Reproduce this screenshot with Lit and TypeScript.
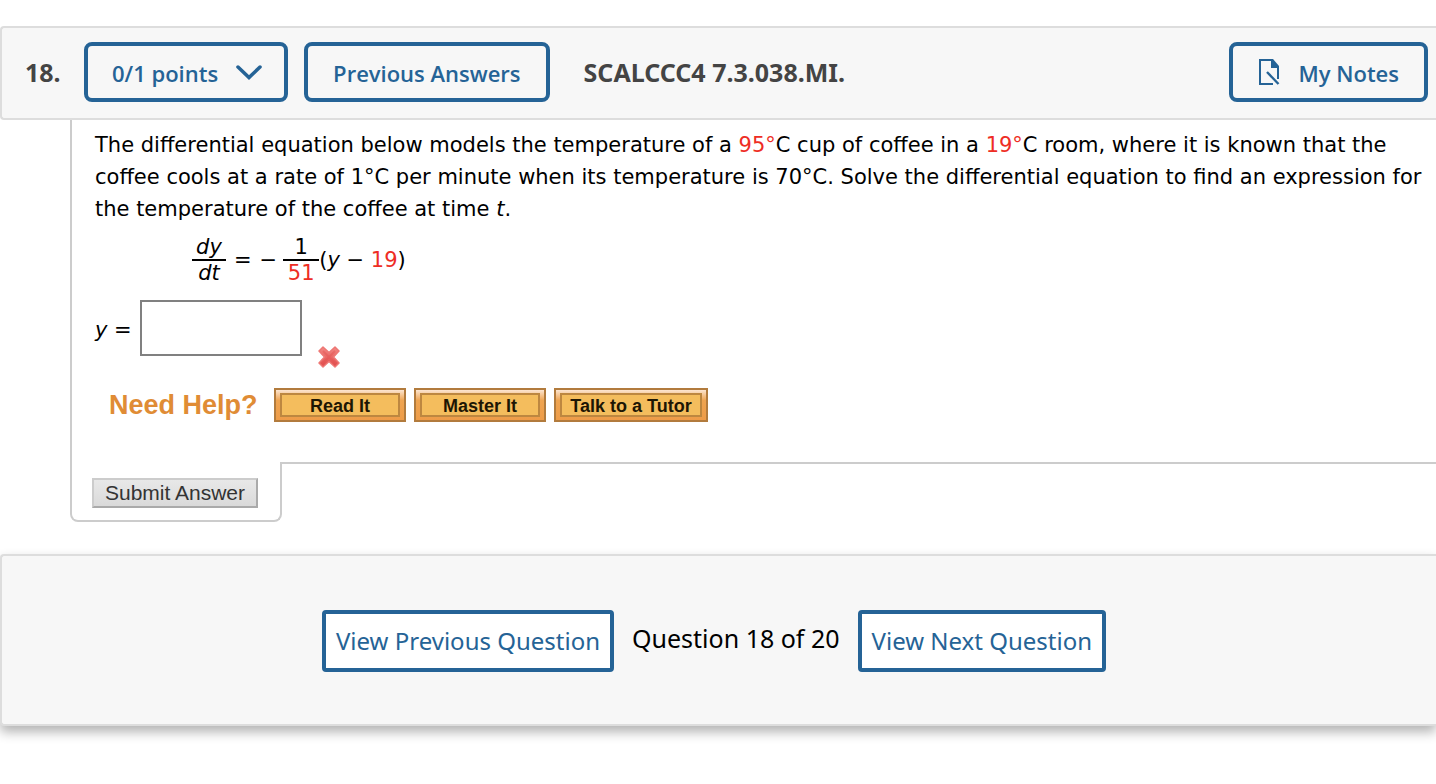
import { LitElement, html, css } from "lit";
import { customElement } from "lit/decorators.js";

@customElement("app-root")
export class AppRoot extends LitElement {
  static styles = css`
    :host {
      display: block;
      padding: 26px 0 56px;
      background: #fff;
      color: #000;
      font-family: "DejaVu Sans", Verdana, sans-serif;
      overflow-x: hidden;
    }
    * { box-sizing: border-box; }
    button { margin: 0; cursor: pointer; white-space: nowrap; }
    .header {
      display: flex;
      align-items: center;
      gap: 16px;
      padding: 14px 8px 16px 23px;
      border: 2px solid #ddd;
      border-right: 0;
      border-radius: 4px 0 0 4px;
      background: #f7f7f7;
      font-family: "Noto Sans", sans-serif;
    }
    .number, .code {
      margin: 0;
      color: #444;
      font-size: 25px;
      line-height: 34px;
      font-weight: 700;
    }
    .number { width: 43px; }
    .code { flex: 1; padding-left: 18px; }
    .outline {
      display: flex;
      align-items: center;
      height: 60px;
      padding: 2px 25px 0;
      border: 4px solid #256396;
      border-radius: 8px;
      background: transparent;
      color: #256396;
      font: 600 22px/32px "Open Sans", sans-serif;
    }
    .outline svg { flex: none; margin-bottom: 2px; }
    .points { gap: 17px; padding-left: 24px; padding-right: 21px; }
    .notes { gap: 18px; }
    .body {
      margin-left: 70px;
      padding: 9px 12px 40px 23px;
      border-left: 2px solid #ccc;
      font-size: 21px;
      line-height: 32px;
    }
    .prompt { margin: 0; }
    .red { color: #ee2d24; }
    .equation {
      display: flex;
      align-items: center;
      height: 48px;
      margin: 11px 0 16px 97px;
      line-height: 26px;
    }
    .fraction {
      display: flex;
      flex-direction: column;
      width: 34px;
      text-align: center;
    }
    .fraction span { line-height: 24px; }
    .fraction span:first-child { border-bottom: 2px solid #000; }
    .equals { padding: 0 8px; }
    .coefficient { width: 36px; margin-left: 6px; }
    .answer { display: flex; align-items: center; height: 68px; }
    .answer label { width: 45px; padding-bottom: 8px; }
    .answer input {
      width: 162px;
      height: 56px;
      margin-bottom: 12px;
      padding: 4px 8px;
      border: 2px solid #808080;
      border-radius: 0;
      background: #fff;
      font: inherit;
    }
    .answer svg { align-self: flex-end; margin-left: 16px; }
    .help { display: flex; align-items: center; gap: 8px; margin: 20px 0 0 14px; }
    .help-title {
      width: 157px;
      color: #e08c35;
      font: 700 27px/34px "Liberation Sans", Arial, sans-serif;
    }
    .orange {
      width: 132px;
      height: 34px;
      padding: 3px 4px;
      border: 2px solid #b27b3d;
      background: linear-gradient(#fce5d0, #efa451 35%, #ee9c49);
      color: #1d1604;
    }
    .orange span {
      display: block;
      padding-top: 2px;
      border: 2px solid #bd8740;
      background: #f4bd5d;
      font: 700 18px/18px "Liberation Sans", Arial, sans-serif;
    }
    .wide { width: 154px; }
    .footer { display: flex; align-items: flex-start; }
    .tab {
      width: 212px;
      height: 60px;
      margin-left: 70px;
      padding: 16px 20px 12px;
      border: 2px solid #ccc;
      border-top: 0;
      border-radius: 0 0 8px 8px;
    }
    .rule { flex: 1; border-top: 2px solid #ccc; margin-left: -2px; }
    .submit {
      width: 166px;
      height: 30px;
      padding: 0;
      border: 2px solid;
      border-color: #ccc #aaa #aaa #ccc;
      background: linear-gradient(#e8e8e8, #dadada);
      color: #333;
      font: 21px/26px "Liberation Sans", Arial, sans-serif;
    }
    .pager {
      display: flex;
      align-items: center;
      justify-content: center;
      gap: 18px;
      margin-top: 32px;
      padding: 54px 10px 52px 0;
      border: 2px solid #ddd;
      border-right: 0;
      border-radius: 4px 0 0 4px;
      background: #f7f7f7;
      box-shadow: 0 6px 12px rgba(0, 0, 0, 0.3);
      font: 25px/34px "Noto Sans", sans-serif;
    }
    .page {
      height: 62px;
      padding: 0 10px;
      border: 4px solid #256396;
      border-radius: 4px;
      background: #fff;
      color: #256396;
      font: 24px/34px "Noto Sans", sans-serif;
    }
    .count { padding-bottom: 6px; }
  `;

  render() {
    return html`
      <header class="header">
        <h2 class="number">18.</h2>
        <button class="outline points">
          <span>0/1 points</span>
          <svg width="28" height="18" viewBox="0 0 28 18" fill="none" stroke="#256396" stroke-width="3.500" stroke-linecap="round" stroke-linejoin="miter" aria-hidden="true">
            <path d="M3 4 14 14.500 25 4" />
          </svg>
        </button>
        <button class="outline">Previous Answers</button>
        <h3 class="code">SCALCCC4 7.3.038.MI.</h3>
        <button class="outline notes">
          <svg width="22" height="26" viewBox="0 0 22 26" aria-hidden="true">
            <path d="M14 1H2v24h13M20 20V8" fill="none" stroke="#256396" stroke-width="2" />
            <path d="M13 0h2l6 7v2h-8z" fill="#256396" />
            <path d="M9 13 20.500 25" fill="none" stroke="#256396" stroke-width="2.400" />
          </svg>
          <span>My Notes</span>
        </button>
      </header>
      <main class="body">
        <p class="prompt">
          The differential equation below models the temperature of a
          <span class="red">95°</span>C cup of coffee in a
          <span class="red">19°</span>C room, where it is known that the coffee
          cools at a rate of 1°C per minute when its temperature is 70°C. Solve
          the differential equation to find an expression for the temperature of
          the coffee at time <i>t</i>.
        </p>
        <div class="equation">
          <span class="fraction"><span><i>dy</i></span><span><i>dt</i></span></span>
          <span class="equals">=</span>
          <span>−</span>
          <span class="fraction coefficient"><span>1</span><span class="red">51</span></span>
          <span>(<i>y</i> − <span class="red">19</span>)</span>
        </div>
        <div class="answer">
          <label for="answer"><i>y</i> =</label>
          <input id="answer" type="text" />
          <svg width="22" height="22" viewBox="0 0 22 22" role="img" aria-label="Incorrect">
            <defs>
              <linearGradient id="cross" x2="0" y2="1">
                <stop stop-color="#f28a86" />
                <stop offset="1" stop-color="#e04a4a" />
              </linearGradient>
            </defs>
            <path d="M5 1 11 6.500 17 1 21 5 15.500 11 21 17 17 21 11 15.500 5 21 1 17 6.500 11 1 5z" fill="url(#cross)" stroke="#ee7774" stroke-width="1.500" stroke-linejoin="round" />
            <path d="M5 5 17 17M17 5 5 17" stroke="#e4514f" stroke-width="2" opacity=".4" />
          </svg>
        </div>
        <div class="help">
          <span class="help-title">Need Help?</span>
          <button class="orange"><span>Read It</span></button>
          <button class="orange"><span>Master It</span></button>
          <button class="orange wide"><span>Talk to a Tutor</span></button>
        </div>
      </main>
      <div class="footer">
        <div class="tab"><button class="submit">Submit Answer</button></div>
        <div class="rule"></div>
      </div>
      <nav class="pager">
        <button class="page">View Previous Question</button>
        <span class="count">Question 18 of 20</span>
        <button class="page">View Next Question</button>
      </nav>
    `;
  }
}
